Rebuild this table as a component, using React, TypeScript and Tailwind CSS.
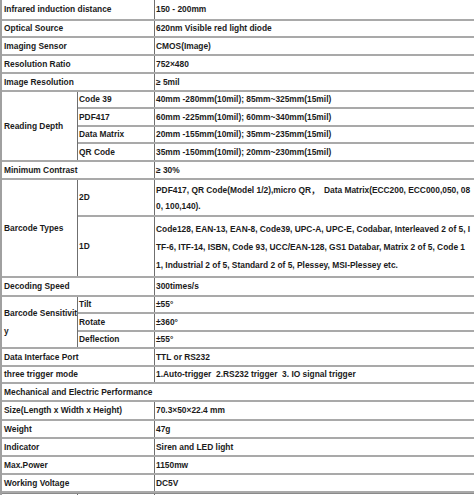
import React from 'react';

type Sub = { sub: string; value: string[]; h: number; leading?: string };
type Row =
  | { kind: 'single'; label: string; value: string; h: number }
  | { kind: 'group'; label: string[]; rows: Sub[] }
  | { kind: 'full'; label: string; h: number };

const ROWS: Row[] = [
  { kind: 'single', label: 'Infrared induction distance', value: '150 - 200mm', h: 21 },
  { kind: 'single', label: 'Optical Source', value: '620nm Visible red light diode', h: 17 },
  { kind: 'single', label: 'Imaging Sensor', value: 'CMOS(Image)', h: 18 },
  { kind: 'single', label: 'Resolution Ratio', value: '752×480', h: 18 },
  { kind: 'single', label: 'Image Resolution', value: '≥ 5mil', h: 18 },
  {
    kind: 'group',
    label: ['Reading Depth'],
    rows: [
      { sub: 'Code 39', value: ['40mm -280mm(10mil); 85mm~325mm(15mil)'], h: 17 },
      { sub: 'PDF417', value: ['60mm -225mm(10mil); 60mm~340mm(15mil)'], h: 18 },
      { sub: 'Data Matrix', value: ['20mm -155mm(10mil); 35mm~235mm(15mil)'], h: 17 },
      { sub: 'QR Code', value: ['35mm -150mm(10mil); 20mm~230mm(15mil)'], h: 18 },
    ],
  },
  { kind: 'single', label: 'Minimum Contrast', value: '≥ 30%', h: 18 },
  {
    kind: 'group',
    label: ['Barcode Types'],
    rows: [
      {
        sub: '2D',
        value: ['PDF417, QR Code(Model 1/2),micro QR，  Data Matrix(ECC200, ECC000,050, 08', '0, 100,140).'],
        h: 37,
        leading: 'leading-[16px]',
      },
      {
        sub: '1D',
        value: [
          'Code128, EAN-13, EAN-8, Code39, UPC-A, UPC-E, Codabar, Interleaved 2 of 5, I',
          'TF-6, ITF-14, ISBN, Code 93, UCC/EAN-128, GS1 Databar, Matrix 2 of 5, Code 1',
          '1, Industrial 2 of 5, Standard 2 of 5, Plessey, MSI-Plessey etc.',
        ],
        h: 61,
        leading: 'leading-[18px]',
      },
    ],
  },
  { kind: 'single', label: 'Decoding Speed', value: '300times/s', h: 19 },
  {
    kind: 'group',
    label: ['Barcode Sensitivit', 'y'],
    rows: [
      { sub: 'Tilt', value: ['±55°'], h: 17 },
      { sub: 'Rotate', value: ['±360°'], h: 18 },
      { sub: 'Deflection', value: ['±55°'], h: 17 },
    ],
  },
  { kind: 'single', label: 'Data Interface Port', value: 'TTL or RS232', h: 18 },
  { kind: 'single', label: 'three trigger mode', value: '1.Auto-trigger  2.RS232 trigger  3. IO signal trigger', h: 17 },
  { kind: 'full', label: 'Mechanical and Electric Performance', h: 18 },
  { kind: 'single', label: 'Size(Length x Width x Height)', value: '70.3×50×22.4 mm', h: 19 },
  { kind: 'single', label: 'Weight', value: '47g', h: 18 },
  { kind: 'single', label: 'Indicator', value: 'Siren and LED light', h: 18 },
  { kind: 'single', label: 'Max.Power', value: '1150mw', h: 18 },
  { kind: 'single', label: 'Working Voltage', value: 'DC5V', h: 18 },
];

const line = 'border-b-2 border-[#a9a9a9]';
const vline = 'border-l border-[#6f6f6f]';

function SpecRow({ row }: { row: Row }) {
  if (row.kind === 'full') {
    return (
      <div className={`flex items-center pl-[2px] ${line}`} style={{ height: row.h }}>
        {row.label}
      </div>
    );
  }
  if (row.kind === 'single') {
    return (
      <div className={`flex ${line}`} style={{ height: row.h }}>
        <div className="w-[152px] shrink-0 flex items-center pl-[2px]">{row.label}</div>
        <div className={`flex-1 flex items-center pl-[1px] whitespace-pre ${vline}`}>{row.value}</div>
      </div>
    );
  }
  const total = row.rows.reduce((s, r) => s + r.h, 0);
  return (
    <div className={`flex ${line}`} style={{ height: total }}>
      <div className="w-[75px] shrink-0 flex flex-col justify-center pl-[2px] leading-[18px]">
        {row.label.map((l) => (
          <span key={l} className="whitespace-nowrap">
            {l}
          </span>
        ))}
      </div>
      <div className={`flex-1 flex flex-col ${vline}`}>
        {row.rows.map((r, i) => (
          <div
            key={r.sub}
            className={`flex ${i < row.rows.length - 1 ? line : ''}`}
            style={{ height: i < row.rows.length - 1 ? r.h : r.h - 2 }}
          >
            <div className="w-[76px] shrink-0 flex items-center pl-[1px]">{r.sub}</div>
            <div className={`flex-1 flex flex-col justify-center pl-[1px] ${r.leading ?? ''} ${vline}`}>
              {r.value.map((v) => (
                <span key={v} className="whitespace-pre">
                  {v}
                </span>
              ))}
            </div>
          </div>
        ))}
      </div>
    </div>
  );
}

export default function App() {
  return (
    <div
      className="w-[474px] h-[495px] overflow-hidden bg-white text-[#1b1b1b] text-[8.4px] font-bold"
      style={{ fontFamily: '"Liberation Sans", Arial, "Noto Sans CJK SC", sans-serif' }}
    >
      <div className="w-[600px] border-l-2 border-[#a0a0a0]">
        {ROWS.map((r, i) => (
          <SpecRow key={i} row={r} />
        ))}
        <div className="flex h-[20px] border-t border-[#8a8a8a]">
          <div className="w-[75px] shrink-0" />
          <div className={`w-[77px] shrink-0 ${vline}`} />
          <div className={`flex-1 ${vline}`} />
        </div>
      </div>
    </div>
  );
}
